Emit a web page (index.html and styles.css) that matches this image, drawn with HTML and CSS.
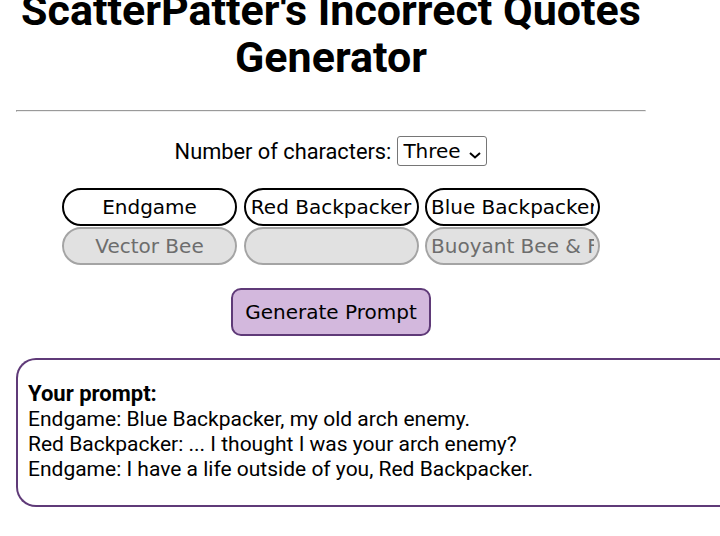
FILE: index.html
```html
<!DOCTYPE html>
<html lang="en">
<head>
    <meta charset="UTF-8">
    <meta name="viewport" content="width=device-width, initial-scale=1.0">
    <title>ScatterPatter's Incorrect Quotes Generator</title>
    <link rel="stylesheet" href="styles.css">
</head>
<body>
    <div class="container">
        <h1>ScatterPatter's Incorrect Quotes Generator</h1>
        <hr>

        <div class="count-row">
            <label for="char-count">Number of characters:</label>
            <span class="select-wrap">
                <select id="char-count">
                    <option>One</option>
                    <option>Two</option>
                    <option selected>Three</option>
                    <option>Four</option>
                    <option>Five</option>
                    <option>Six</option>
                </select>
                <svg class="chevron" width="12" height="7" viewBox="0 0 12 7">
                    <path d="M1 1 L6 5.5 L11 1" fill="none" stroke="#000" stroke-width="2"/>
                </svg>
            </span>
        </div>

        <div class="names">
            <div class="name-row">
                <input type="text" class="name" value="Endgame">
                <input type="text" class="name" value="Red Backpacker">
                <input type="text" class="name" value="Blue Backpacker">
            </div>
            <div class="name-row">
                <input type="text" class="name" value="Vector Bee" disabled>
                <input type="text" class="name" value="" disabled>
                <input type="text" class="name" value="Buoyant Bee &amp; Friends" disabled>
            </div>
        </div>

        <button type="button" class="generate">Generate Prompt</button>

        <div class="prompt">
            <strong>Your prompt:</strong><br>
            Endgame: Blue Backpacker, my old arch enemy.<br>
            Red Backpacker: ... I thought I was your arch enemy?<br>
            Endgame: I have a life outside of you, Red Backpacker.
        </div>
    </div>
</body>
</html>
```

FILE: styles.css
```css
:root {
    --text-color: #000000;
    --purple-dark: #5f3a78;
    --purple-light: #d3b8dd;
    --disabled-bg: #e1e1e1;
    --disabled-border: #a4a4a4;
    --disabled-text: #6d6d6d;
}
body {
    font-family: Roboto, 'Noto Sans', sans-serif;
    font-size: 20px;
    color: var(--text-color);
    margin: 0 0 0 8px;
}
.container {
    width: 630px;
    margin-left: 8px;
}
h1 {
    font-size: 43px;
    line-height: 47px;
    font-weight: bold;
    text-align: center;
    margin: -13px 0 29px;
}
hr {
    margin: 0;
}
.count-row {
    display: flex;
    justify-content: center;
    align-items: center;
    gap: 6px;
    margin-top: 24px;
    font-size: 21.8px;
}
.select-wrap {
    position: relative;
    display: flex;
}
select {
    appearance: none;
    box-sizing: border-box;
    width: 90px;
    height: 30px;
    padding: 0 24px 0 5px;
    border: 1px solid #767676;
    border-radius: 3px;
    background-color: #ffffff;
    font-family: 'DejaVu Sans', sans-serif;
    font-size: 20px;
    color: var(--text-color);
}
.chevron {
    position: absolute;
    right: 6px;
    top: 16px;
    pointer-events: none;
}
.names {
    display: flex;
    flex-direction: column;
    align-items: center;
    gap: 1px;
    margin-top: 22px;
}
.name-row {
    display: flex;
    gap: 6.5px;
}
.name {
    box-sizing: border-box;
    width: 175px;
    height: 38px;
    padding: 0 4px;
    border: 2px solid var(--text-color);
    border-radius: 19px;
    font-family: 'DejaVu Sans', sans-serif;
    font-size: 20px;
    text-align: center;
    color: var(--text-color);
    background-color: #ffffff;
}
.name:disabled {
    background-color: var(--disabled-bg);
    border-color: var(--disabled-border);
    color: var(--disabled-text);
}
.generate {
    display: block;
    box-sizing: border-box;
    width: 200px;
    height: 48px;
    margin: 23px auto 0;
    border: 2px solid var(--purple-dark);
    border-radius: 10px;
    background-color: var(--purple-light);
    font-family: 'DejaVu Sans', sans-serif;
    font-size: 20px;
    color: var(--text-color);
    cursor: pointer;
}
/* the box runs on past the right edge of the window */
.prompt {
    box-sizing: border-box;
    width: 704px;
    margin-top: 22px;
    padding: 21px 10px 23px;
    border: 2px solid var(--purple-dark);
    border-right: none;
    border-radius: 20px 0 0 20px;
    font-size: 21px;
    line-height: 25px;
}
.prompt strong {
    font-size: 22px;
}
```
